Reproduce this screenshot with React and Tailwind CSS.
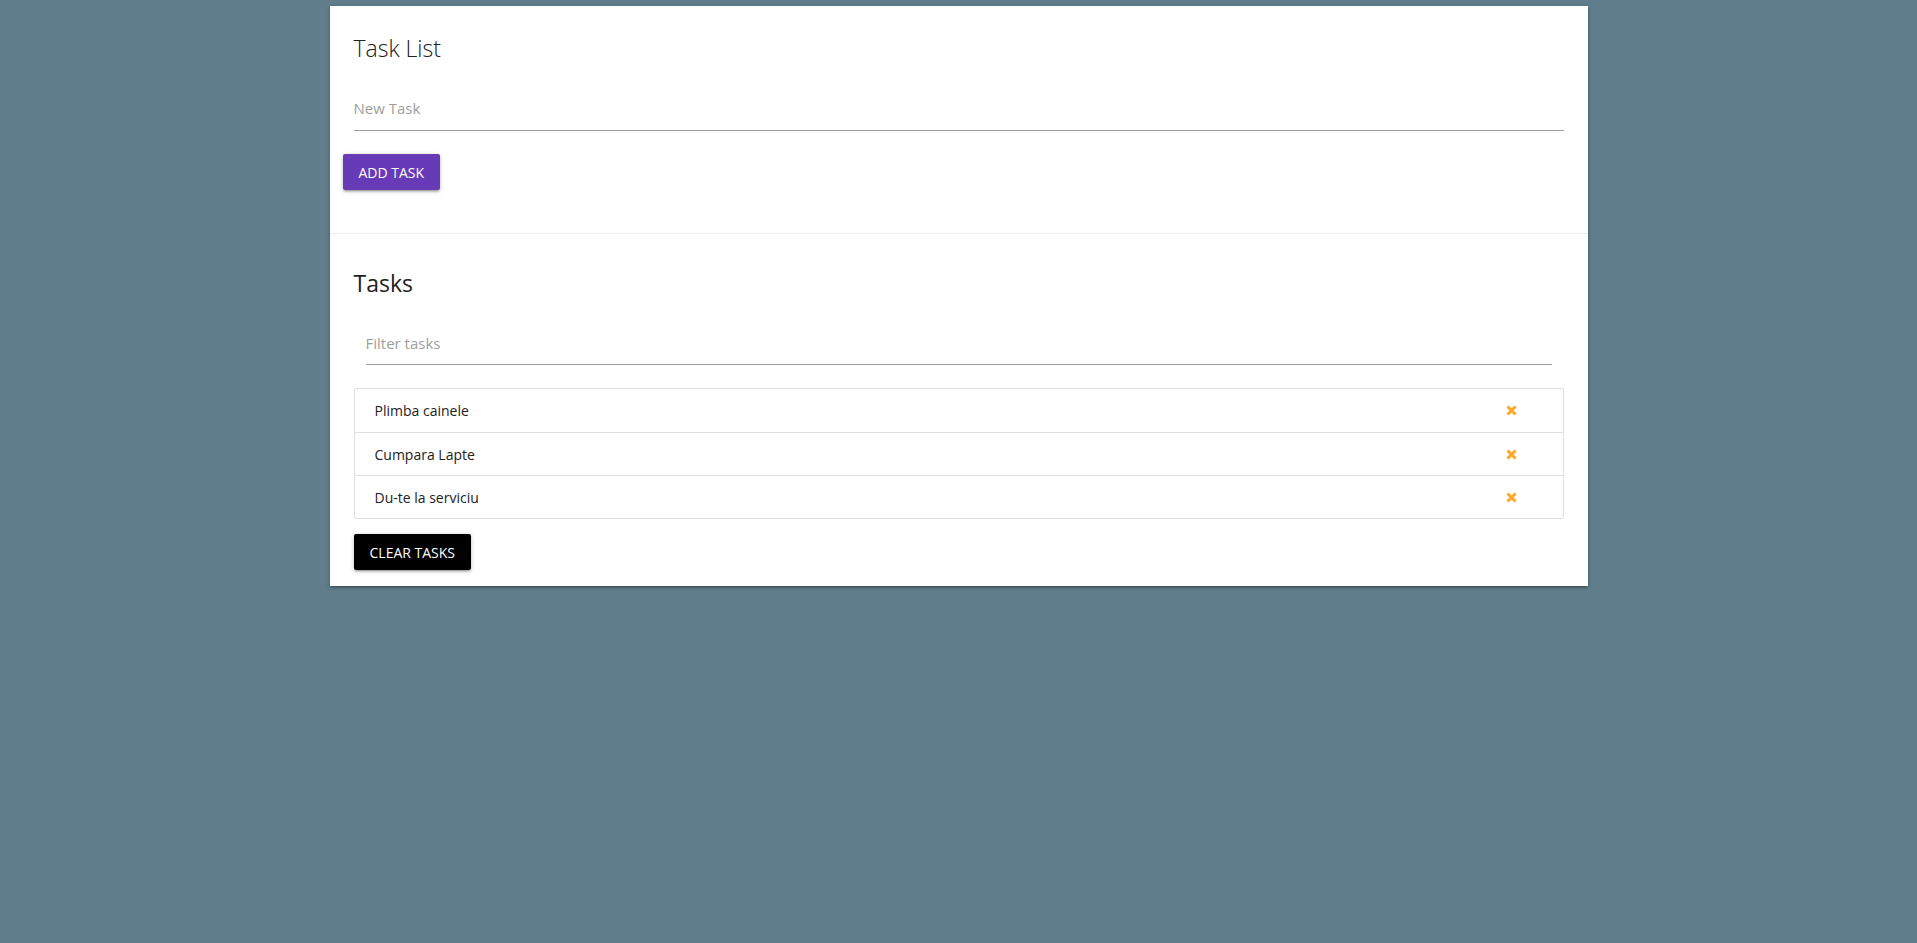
import React, { useState } from 'react';

const FONT = { fontFamily: '"Open Sans", "Noto Sans", sans-serif' };

function RemoveIcon() {
  return (
    <svg width="11" height="11" viewBox="0 0 11 11" className="block">
      <path d="M1.5 1.5 L9.5 9.5 M9.5 1.5 L1.5 9.5" stroke="#ffa726" strokeWidth="3" strokeLinecap="butt" />
    </svg>
  );
}

export default function App() {
  const [tasks, setTasks] = useState(['Plimba cainele', 'Cumpara Lapte', 'Du-te la serviciu']);
  const [task, setTask] = useState('');
  const [filter, setFilter] = useState('');

  function addTask(e) {
    e.preventDefault();
    if (!task.trim()) return;
    setTasks([...tasks, task.trim()]);
    setTask('');
  }

  const shown = tasks.filter((t) => t.toLowerCase().includes(filter.toLowerCase()));

  return (
    <div className="min-h-screen bg-[#607d8b] pt-[6px]" style={FONT}>
      <div className="w-[1258px] h-[580px] mx-auto bg-white shadow-[0_2px_2px_0_rgba(0,0,0,0.14),0_3px_1px_-2px_rgba(0,0,0,0.12),0_1px_5px_0_rgba(0,0,0,0.2)]">
        <form onSubmit={addTask} className="px-6 pt-[26px] h-[228px] border-b border-[#eeeeee]">
          <h2 className="text-[23px] font-light leading-[32px] text-[#212121]">Task List</h2>
          <div className="mt-[21px]">
            <input
              value={task}
              onChange={(e) => setTask(e.target.value)}
              placeholder="New Task"
              className="w-full h-[46px] text-[15px] text-[#212121] placeholder-[#9e9e9e] border-b border-[#9e9e9e] outline-none bg-transparent"
            />
          </div>
          <button
            type="submit"
            className="mt-[23px] -ml-[11px] h-9 px-4 bg-[#673ab7] text-white text-[14px] uppercase rounded-[2px] shadow-[0_2px_2px_0_rgba(0,0,0,0.14),0_3px_1px_-2px_rgba(0,0,0,0.12),0_1px_5px_0_rgba(0,0,0,0.2)]"
          >
            Add Task
          </button>
        </form>

        <div className="px-6 pt-[33px]">
          <h2 className="text-[23px] leading-[32px] text-[#212121]">Tasks</h2>
          <div className="px-3 mt-[22px]">
            <input
              value={filter}
              onChange={(e) => setFilter(e.target.value)}
              placeholder="Filter tasks"
              className="w-full h-[44px] text-[15px] text-[#212121] placeholder-[#9e9e9e] border-b border-[#9e9e9e] outline-none bg-transparent"
            />
          </div>
          <ul className="mt-[23px] border border-[#e0e0e0] rounded-[2px]">
            {shown.map((t, i) => (
              <li
                key={t + i}
                className={'flex items-center justify-between h-[43px] pl-5 pr-[46px] text-[14px] text-[#212121] ' + (i > 0 ? 'border-t border-[#e0e0e0]' : '')}
              >
                <span>{t}</span>
                <button type="button" onClick={() => setTasks(tasks.filter((x) => x !== t))}>
                  <RemoveIcon />
                </button>
              </li>
            ))}
          </ul>
          <button
            type="button"
            onClick={() => setTasks([])}
            className="mt-[15px] h-9 px-4 bg-black text-white text-[14px] uppercase rounded-[2px] shadow-[0_2px_2px_0_rgba(0,0,0,0.14),0_3px_1px_-2px_rgba(0,0,0,0.12),0_1px_5px_0_rgba(0,0,0,0.2)]"
          >
            Clear Tasks
          </button>
        </div>
      </div>
    </div>
  );
}
